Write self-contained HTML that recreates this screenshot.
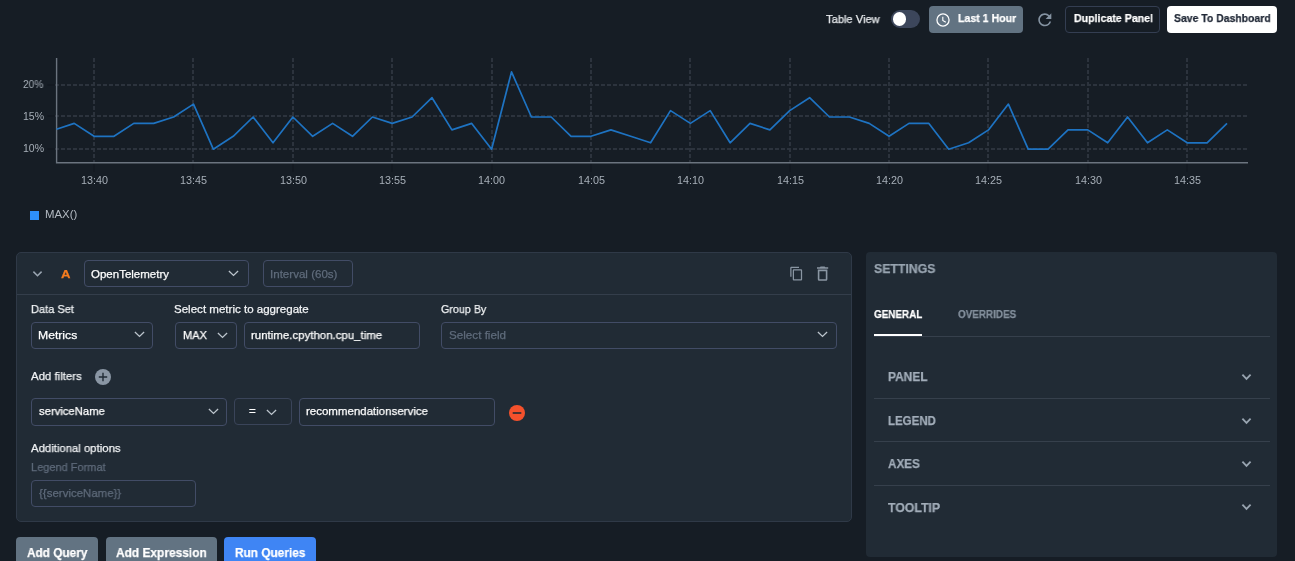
<!DOCTYPE html>
<html>
<head>
<meta charset="utf-8">
<title>Panel Editor</title>
<style>
*{box-sizing:border-box;margin:0;padding:0}
html,body{width:1295px;height:561px;overflow:hidden;background:#161d25}
body{font-family:"Liberation Sans",sans-serif;font-size:12px;color:#fff;position:relative}
.abs{position:absolute}
.t{position:absolute;white-space:nowrap;line-height:14px;transform-origin:0 50%;will-change:transform;-webkit-text-stroke:0.25px}
/* top bar */
.toggle{left:891px;top:10px;width:29px;height:18px;border-radius:9px;background:#3c465b}
.knob{left:1.6px;top:2.2px;width:13.8px;height:13.8px;border-radius:50%;background:#fff}
.btn{position:absolute;top:6px;height:27px;border-radius:4px}
.b-time{left:929px;width:94px;background:#627382}
.b-dup{left:1065px;width:95px;border:1px solid #343e52}
.b-save{left:1167px;width:110px;background:#fff}
/* chart */
svg.chart{position:absolute;left:0;top:0;width:1295px;height:240px}
svg.chart .g line{stroke:#2c333d;stroke-width:2;stroke-dasharray:4 2;shape-rendering:crispEdges}
svg.chart .k line{stroke:#11171e;stroke-width:1}
.lg-sq{left:30px;top:211px;width:9px;height:9px;background:#2e90fa}
/* query panel */
.qp{left:16px;top:252px;width:836px;height:270px;background:#212b35;border:1px solid #2f3947;border-radius:5px}
.qh{left:17px;top:294px;width:834px;height:1px;background:#343e4b}
.box{position:absolute;height:27px;border:1px solid #424c66;border-radius:4px}
.chev{position:absolute;width:11px;height:7px}
.bb{position:absolute;top:537px;height:30px;border-radius:4px}
/* settings */
.sp{left:866px;top:252px;width:411px;height:305px;background:#212b35;border-radius:4px}
.sep{position:absolute;left:874px;width:396px;height:1px;background:#36404c}
</style>
</head>
<body>
<!-- top bar -->
<div class="abs toggle"><div class="abs knob"></div></div>
<div class="btn b-time"></div>
<svg class="abs" style="left:934.8px;top:12.100px" width="16" height="16" viewBox="0 0 24 24"><circle cx="12" cy="12" r="9.100" fill="none" stroke="#fff" stroke-width="1.900"/><path d="M11.700 7v5.600l4.500 2.700" fill="none" stroke="#fff" stroke-width="1.700"/></svg>
<svg class="abs" style="left:1034.9px;top:9.600px" width="19.600" height="19.600" viewBox="0 0 24 24"><path fill="#8593a2" d="M17.650 6.350A7.958 7.958 0 0 0 12 4c-4.420 0-7.990 3.580-7.990 8s3.570 8 7.990 8c3.730 0 6.840-2.550 7.730-6h-2.080A5.990 5.990 0 0 1 12 18c-3.310 0-6-2.690-6-6s2.690-6 6-6c1.660 0 3.140.69 4.220 1.780L13 11h7V4l-2.350 2.350z"/></svg>
<div class="btn b-dup"></div>
<div class="btn b-save"></div>

<!-- chart -->
<svg class="chart" viewBox="0 0 1295 240">
  <g class="k"><line x1="94" y1="163.5" x2="94" y2="172"/><line x1="193" y1="163.5" x2="193" y2="172"/><line x1="293" y1="163.5" x2="293" y2="172"/><line x1="392" y1="163.5" x2="392" y2="172"/><line x1="492" y1="163.5" x2="492" y2="172"/><line x1="591" y1="163.5" x2="591" y2="172"/><line x1="690" y1="163.5" x2="690" y2="172"/><line x1="790" y1="163.5" x2="790" y2="172"/><line x1="889" y1="163.5" x2="889" y2="172"/><line x1="988" y1="163.5" x2="988" y2="172"/><line x1="1088" y1="163.5" x2="1088" y2="172"/><line x1="1187" y1="163.5" x2="1187" y2="172"/><line x1="47.5" y1="85" x2="56" y2="85"/><line x1="47.5" y1="116" x2="56" y2="116"/><line x1="47.5" y1="149" x2="56" y2="149"/></g>
  <g class="g"><line x1="94" y1="58" x2="94" y2="162"/><line x1="193" y1="58" x2="193" y2="162"/><line x1="293" y1="58" x2="293" y2="162"/><line x1="392" y1="58" x2="392" y2="162"/><line x1="492" y1="58" x2="492" y2="162"/><line x1="591" y1="58" x2="591" y2="162"/><line x1="690" y1="58" x2="690" y2="162"/><line x1="790" y1="58" x2="790" y2="162"/><line x1="889" y1="58" x2="889" y2="162"/><line x1="988" y1="58" x2="988" y2="162"/><line x1="1088" y1="58" x2="1088" y2="162"/><line x1="1187" y1="58" x2="1187" y2="162"/><line x1="55" y1="85" x2="1248" y2="85"/><line x1="55" y1="116" x2="1248" y2="116"/><line x1="55" y1="149" x2="1248" y2="149"/></g>
  <path d="M56.600 58V162.750H1248" fill="none" stroke="#6b747f" stroke-width="1.400"/>
  <polyline points="56.5,129.2 74.2,123.4 94.1,136.3 114.0,136.3 133.8,123.4 153.7,123.4 173.6,117.0 193.5,104.1 213.3,149.2 233.2,136.3 253.1,117.0 273.0,142.8 292.9,117.0 312.7,136.3 332.6,123.4 352.5,136.3 372.4,117.0 392.2,123.4 412.1,117.0 432.0,97.7 451.9,129.9 471.7,123.4 491.6,149.2 511.5,71.9 531.4,117.0 551.2,117.0 571.1,136.3 591.0,136.3 610.9,129.9 630.7,136.3 650.6,142.8 670.5,110.6 690.4,123.4 710.2,110.6 730.1,142.8 750.0,123.4 769.9,129.9 789.7,110.6 809.6,97.7 829.5,117.0 849.4,117.0 869.2,123.4 889.1,136.3 909.0,123.4 928.9,123.4 948.7,149.2 968.6,142.8 988.5,129.9 1008.4,104.1 1028.2,149.2 1048.1,149.2 1068.0,129.9 1087.8,129.9 1107.7,142.8 1127.6,117.0 1147.5,142.8 1167.3,129.9 1187.2,142.8 1207.1,142.8 1227.0,123.4" fill="none" stroke="#1e73c2" stroke-width="1.700" stroke-linejoin="round"/>
</svg>
<div class="abs lg-sq"></div>

<!-- query panel -->
<div class="abs qp"></div>
<div class="abs qh"></div>
<svg class="abs" style="left:31.500px;top:269.500px" width="11" height="8" viewBox="0 0 11 8"><path d="M1.400 1.600l4.100 4.100 4.100-4.100" fill="none" stroke="#9aa5b1" stroke-width="1.500"/></svg>
<div class="box" style="left:84px;top:260px;width:165px"></div>
<div class="box" style="left:263px;top:260px;width:90px"></div>
<!-- copy + trash -->
<svg class="abs" style="left:789.350px;top:266.300px" width="15" height="15" viewBox="0 0 24 24"><path fill="#8a96a3" d="M16 1H4c-1.100 0-2 .9-2 2v14h2V3h12V1zm3 4H8c-1.100 0-2 .9-2 2v14c0 1.100.9 2 2 2h11c1.100 0 2-.9 2-2V7c0-1.100-.9-2-2-2zm0 16H8V7h11v14z"/></svg>
<svg class="abs" style="left:812.8px;top:263.9px" width="19.200" height="19.200" viewBox="0 0 24 24"><path fill="#8a96a3" d="M6 19c0 1.100.9 2 2 2h8c1.100 0 2-.9 2-2V7H6v12zM8 9h8v10H8V9zm7.500-5l-1-1h-5l-1 1H5v2h14V4h-3.500z"/></svg>

<div class="box" style="left:31px;top:322px;width:122px"></div>
<div class="box" style="left:175px;top:322px;width:62px"></div>
<div class="box" style="left:244px;top:322px;width:176px"></div>
<div class="box" style="left:441px;top:322px;width:396px"></div>

<svg class="abs" style="left:95.200px;top:369.200px" width="16" height="16" viewBox="0 0 16 16"><circle cx="8" cy="8" r="8" fill="#8a96a4"/><path d="M8 3.800v8.400M3.800 8h8.400" stroke="#212b35" stroke-width="1.400"/></svg>
<div class="box" style="left:31px;top:398px;width:196px;height:28px"></div>
<div class="box" style="left:234px;top:398px;width:58px;border-color:#3a4459"></div>
<div class="box" style="left:299px;top:398px;width:196px;height:28px"></div>
<svg class="abs" style="left:508.700px;top:404.700px" width="16" height="16" viewBox="0 0 16 16"><circle cx="8" cy="8" r="8" fill="#f4512c"/><path d="M3.700 8h8.600" stroke="#212b35" stroke-width="1.600"/></svg>

<div class="box" style="left:31px;top:480px;width:165px"></div>

<!-- select chevrons -->
<svg class="chev" style="left:228.400px;top:270.100px" viewBox="0 0 11 7"><path d="M.9 1l4.600 4.400 4.600-4.400" fill="none" stroke="#bcc4cc" stroke-width="1.300"/></svg>
<svg class="chev" style="left:133.500px;top:331px" viewBox="0 0 11 7"><path d="M.9 1l4.600 4.400 4.600-4.400" fill="none" stroke="#bcc4cc" stroke-width="1.300"/></svg>
<svg class="chev" style="left:216.900px;top:332px" viewBox="0 0 11 7"><path d="M.9 1l4.600 4.400 4.600-4.400" fill="none" stroke="#bcc4cc" stroke-width="1.300"/></svg>
<svg class="chev" style="left:816.600px;top:331px" viewBox="0 0 11 7"><path d="M.9 1l4.600 4.400 4.600-4.400" fill="none" stroke="#bcc4cc" stroke-width="1.300"/></svg>
<svg class="chev" style="left:207.500px;top:408px" viewBox="0 0 11 7"><path d="M.9 1l4.600 4.400 4.600-4.400" fill="none" stroke="#bcc4cc" stroke-width="1.300"/></svg>
<svg class="chev" style="left:265.700px;top:409px" viewBox="0 0 11 7"><path d="M.9 1l4.600 4.400 4.600-4.400" fill="none" stroke="#bcc4cc" stroke-width="1.300"/></svg>

<!-- bottom buttons -->
<div class="bb" style="left:16px;width:82px;background:#627382"></div>
<div class="bb" style="left:106px;width:111px;background:#627382"></div>
<div class="bb" style="left:224px;width:92px;background:#3f85f4"></div>

<!-- settings panel -->
<div class="abs sp"></div>
<div class="sep" style="top:336px"></div>
<div class="abs" style="left:874px;top:334px;width:48px;height:2px;background:#fff"></div>
<div class="sep" style="top:398px"></div>
<div class="sep" style="top:441px"></div>
<div class="sep" style="top:485px"></div>
<svg class="abs" style="left:1241px;top:372.500px" width="11" height="8" viewBox="0 0 11 8"><path d="M1.400 1.700l4.100 4.200 4.100-4.200" fill="none" stroke="#98a4b0" stroke-width="1.800"/></svg>
<svg class="abs" style="left:1241px;top:416.500px" width="11" height="8" viewBox="0 0 11 8"><path d="M1.400 1.700l4.100 4.200 4.100-4.200" fill="none" stroke="#98a4b0" stroke-width="1.800"/></svg>
<svg class="abs" style="left:1241px;top:460px" width="11" height="8" viewBox="0 0 11 8"><path d="M1.400 1.700l4.100 4.200 4.100-4.200" fill="none" stroke="#98a4b0" stroke-width="1.800"/></svg>
<svg class="abs" style="left:1241px;top:503px" width="11" height="8" viewBox="0 0 11 8"><path d="M1.400 1.700l4.100 4.200 4.100-4.200" fill="none" stroke="#98a4b0" stroke-width="1.800"/></svg>

<!-- text -->
<div class="t" style="left:826.26px;top:12.02px;font-size:11.5px;color:#e9ecef;transform:scaleX(0.9692);">Table View</div>
<div class="t" style="left:957.51px;top:11.02px;font-size:11.5px;font-weight:bold;color:#fff;transform:scaleX(0.9206);">Last 1 Hour</div>
<div class="t" style="left:1073.51px;top:11.02px;font-size:11.5px;font-weight:bold;color:#fff;transform:scaleX(0.9227);">Duplicate Panel</div>
<div class="t" style="left:1173.98px;top:11.02px;font-size:11.5px;font-weight:bold;color:#1f2735;transform:scaleX(0.9080);">Save To Dashboard</div>
<div class="t" style="left:22.77px;top:77.36px;font-size:10.5px;color:#a7afb8;transform:scaleX(0.9652);-webkit-text-stroke:0;">20%</div>
<div class="t" style="left:22.52px;top:108.86px;font-size:10.5px;color:#a7afb8;transform:scaleX(0.9773);-webkit-text-stroke:0;">15%</div>
<div class="t" style="left:22.52px;top:141.36px;font-size:10.5px;color:#a7afb8;transform:scaleX(0.9773);-webkit-text-stroke:0;">10%</div>
<div class="t" style="left:44.58px;top:207.36px;font-size:10.5px;color:#b3bac2;transform:scaleX(1.0832);-webkit-text-stroke:0;">MAX()</div>
<div class="t" style="left:60.66px;top:267.02px;font-size:11.5px;font-weight:bold;color:#f57c1f;transform:scaleX(1.1429);">A</div>
<div class="t" style="left:91.35px;top:266.52px;font-size:11.5px;color:#fff;transform:scaleX(0.9987);">OpenTelemetry</div>
<div class="t" style="left:270.04px;top:266.52px;font-size:11.5px;color:#5f6b7b;transform:scaleX(1.0054);">Interval (60s)</div>
<div class="t" style="left:30.59px;top:302.02px;font-size:11.5px;color:#f2f4f6;transform:scaleX(0.9588);">Data Set</div>
<div class="t" style="left:174.45px;top:302.02px;font-size:11.5px;color:#f2f4f6;transform:scaleX(1.0038);">Select metric to aggregate</div>
<div class="t" style="left:440.84px;top:302.02px;font-size:11.5px;color:#f2f4f6;transform:scaleX(0.9322);">Group By</div>
<div class="t" style="left:38.49px;top:328.02px;font-size:11.5px;color:#fff;transform:scaleX(1.0588);">Metrics</div>
<div class="t" style="left:182.59px;top:328.02px;font-size:11.5px;color:#fff;transform:scaleX(0.9620);">MAX</div>
<div class="t" style="left:251.25px;top:328.02px;font-size:11.5px;color:#fff;transform:scaleX(0.9958);">runtime.cpython.cpu_time</div>
<div class="t" style="left:448.64px;top:328.02px;font-size:11.5px;color:#5f6b7b;transform:scaleX(1.0136);">Select field</div>
<div class="t" style="left:31.05px;top:369.02px;font-size:11.5px;color:#f2f4f6;transform:scaleX(0.9901);">Add filters</div>
<div class="t" style="left:39.16px;top:404.02px;font-size:11.5px;color:#fff;transform:scaleX(0.9796);">serviceName</div>
<div class="t" style="left:248.65px;top:403.52px;font-size:11.5px;color:#fff;transform:scaleX(1.0000);">=</div>
<div class="t" style="left:306.25px;top:404.02px;font-size:11.5px;color:#fff;transform:scaleX(0.9979);">recommendationservice</div>
<div class="t" style="left:31.05px;top:441.02px;font-size:11.5px;color:#f2f4f6;transform:scaleX(0.9862);">Additional options</div>
<div class="t" style="left:30.59px;top:460.02px;font-size:11.5px;color:#5f6b7b;transform:scaleX(0.9565);">Legend Format</div>
<div class="t" style="left:38.70px;top:486.02px;font-size:11.5px;color:#5f6b7b;transform:scaleX(0.9963);">{{serviceName}}</div>
<div class="t" style="left:27.00px;top:545.89px;font-size:13.6px;font-weight:bold;color:#fff;transform:scaleX(0.8683);">Add Query</div>
<div class="t" style="left:115.99px;top:545.89px;font-size:13.6px;font-weight:bold;color:#fff;transform:scaleX(0.8764);">Add Expression</div>
<div class="t" style="left:234.62px;top:545.89px;font-size:13.6px;font-weight:bold;color:#fff;transform:scaleX(0.8703);">Run Queries</div>
<div class="t" style="left:873.92px;top:261.50px;font-size:13px;font-weight:bold;color:#98a4b0;transform:scaleX(0.9454);">SETTINGS</div>
<div class="t" style="left:873.91px;top:307.02px;font-size:11.5px;font-weight:bold;color:#fff;transform:scaleX(0.8592);">GENERAL</div>
<div class="t" style="left:957.81px;top:307.02px;font-size:11.5px;font-weight:bold;color:#84909d;transform:scaleX(0.8593);">OVERRIDES</div>
<div class="t" style="left:887.72px;top:369.50px;font-size:13px;font-weight:bold;color:#a2adb9;transform:scaleX(0.9176);">PANEL</div>
<div class="t" style="left:887.75px;top:413.50px;font-size:13px;font-weight:bold;color:#a2adb9;transform:scaleX(0.8826);">LEGEND</div>
<div class="t" style="left:888.18px;top:456.50px;font-size:13px;font-weight:bold;color:#a2adb9;transform:scaleX(0.9001);">AXES</div>
<div class="t" style="left:888.36px;top:500.50px;font-size:13px;font-weight:bold;color:#a2adb9;transform:scaleX(0.9441);">TOOLTIP</div>
<div class="t" style="left:80.98px;top:173.36px;font-size:10.5px;color:#a7afb8;transform:scaleX(1.0279);-webkit-text-stroke:0;">13:40</div>
<div class="t" style="left:180.35px;top:173.36px;font-size:10.5px;color:#a7afb8;transform:scaleX(1.0299);-webkit-text-stroke:0;">13:45</div>
<div class="t" style="left:279.73px;top:173.36px;font-size:10.5px;color:#a7afb8;transform:scaleX(1.0279);-webkit-text-stroke:0;">13:50</div>
<div class="t" style="left:379.10px;top:173.36px;font-size:10.5px;color:#a7afb8;transform:scaleX(1.0299);-webkit-text-stroke:0;">13:55</div>
<div class="t" style="left:478.48px;top:173.36px;font-size:10.5px;color:#a7afb8;transform:scaleX(1.0279);-webkit-text-stroke:0;">14:00</div>
<div class="t" style="left:577.85px;top:173.36px;font-size:10.5px;color:#a7afb8;transform:scaleX(1.0299);-webkit-text-stroke:0;">14:05</div>
<div class="t" style="left:677.23px;top:173.36px;font-size:10.5px;color:#a7afb8;transform:scaleX(1.0279);-webkit-text-stroke:0;">14:10</div>
<div class="t" style="left:776.60px;top:173.36px;font-size:10.5px;color:#a7afb8;transform:scaleX(1.0299);-webkit-text-stroke:0;">14:15</div>
<div class="t" style="left:875.98px;top:173.36px;font-size:10.5px;color:#a7afb8;transform:scaleX(1.0279);-webkit-text-stroke:0;">14:20</div>
<div class="t" style="left:975.35px;top:173.36px;font-size:10.5px;color:#a7afb8;transform:scaleX(1.0299);-webkit-text-stroke:0;">14:25</div>
<div class="t" style="left:1074.73px;top:173.36px;font-size:10.5px;color:#a7afb8;transform:scaleX(1.0279);-webkit-text-stroke:0;">14:30</div>
<div class="t" style="left:1174.10px;top:173.36px;font-size:10.5px;color:#a7afb8;transform:scaleX(1.0299);-webkit-text-stroke:0;">14:35</div>

</body>
</html>
